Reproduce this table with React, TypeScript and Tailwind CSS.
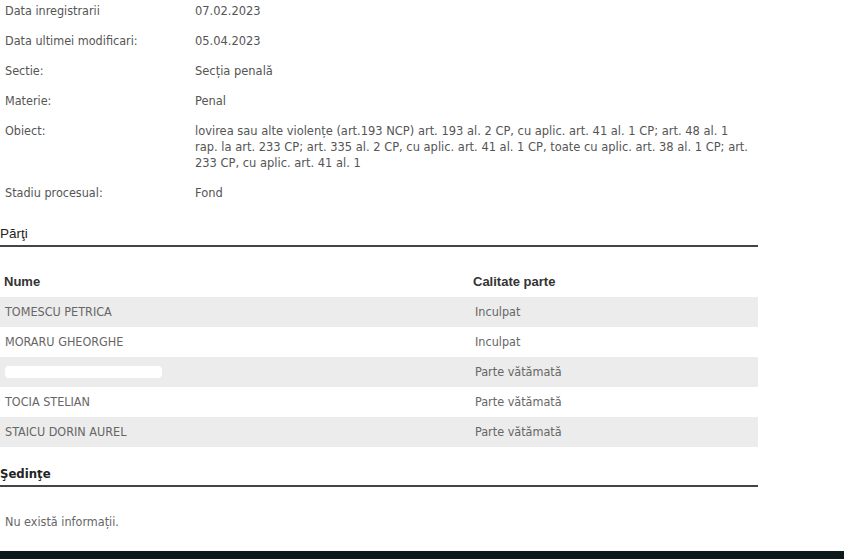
import React from "react";

const info: { label: string; value: React.ReactNode }[] = [
  { label: "Data inregistrarii", value: "07.02.2023" },
  { label: "Data ultimei modificari:", value: "05.04.2023" },
  { label: "Sectie:", value: "Secția penală" },
  { label: "Materie:", value: "Penal" },
  {
    label: "Obiect:",
    value: (
      <>
        lovirea sau alte violențe (art.193 NCP) art. 193 al. 2 CP, cu aplic. art. 41 al. 1 CP; art. 48 al. 1
        <br />
        rap. la art. 233 CP; art. 335 al. 2 CP, cu aplic. art. 41 al. 1 CP, toate cu aplic. art. 38 al. 1 CP; art.
        <br />
        233 CP, cu aplic. art. 41 al. 1
      </>
    ),
  },
  { label: "Stadiu procesual:", value: "Fond" },
];

const parti: { nume: string; calitate: string; hidden?: boolean }[] = [
  { nume: "TOMESCU PETRICA", calitate: "Inculpat" },
  { nume: "MORARU GHEORGHE", calitate: "Inculpat" },
  { nume: "", calitate: "Parte vătămată", hidden: true },
  { nume: "TOCIA STELIAN", calitate: "Parte vătămată" },
  { nume: "STAICU DORIN AUREL", calitate: "Parte vătămată" },
];

const cond = '"DejaVu Sans Condensed", "DejaVu Sans", sans-serif';

export default function App() {
  return (
    <div className="w-[844px] h-[559px] bg-white overflow-hidden flex flex-col relative">
      <div className="flex-1 w-[758px]">
        <div
          className="grid grid-cols-[190px_1fr] gap-y-[14px] pt-[3px] pl-[5px] leading-[16px] text-[#555]"
          style={{ fontFamily: cond }}
        >
          {info.map((r) => (
            <React.Fragment key={r.label}>
              <div className="text-[12.5px]">{r.label}</div>
              <div className="whitespace-nowrap text-[12.75px]">{r.value}</div>
            </React.Fragment>
          ))}
        </div>

        <div
          className="mt-[25px] text-[13.5px] leading-[16px] text-[#222] border-b-2 border-[#444] pb-[3px]"
          style={{ fontFamily: '"Liberation Sans", Arial, sans-serif' }}
        >
          Părţi
        </div>

        <div style={{ fontFamily: '"Liberation Sans", Arial, sans-serif' }}>
          <div className="flex pt-[27px] pb-[7px] text-[13px] leading-[16px] font-bold text-[#333]">
            <div className="w-[473px] pl-[4px]">Nume</div>
            <div>Calitate parte</div>
          </div>
          {parti.map((p, i) => (
            <div
              key={i}
              className={`flex h-[30px] items-center text-[12.5px] leading-[16px] text-[#666] ${i % 2 === 0 ? "bg-[#ececec]" : "bg-white"}`}
              style={{ fontFamily: cond }}
            >
              <div className="w-[475px] pl-[5px]">
                {p.hidden ? (
                  <div className="w-[157px] h-[12px] bg-white rounded-[4px]" />
                ) : (
                  p.nume
                )}
              </div>
              <div>{p.calitate}</div>
            </div>
          ))}
        </div>

        <div
          className="mt-[19px] text-[13px] leading-[16px] text-[#222] font-semibold border-b-2 border-[#444] pb-[3px]"
          style={{ fontFamily: cond }}
        >
          Şedinţe
        </div>
        <div
          className="mt-[27px] pl-[5px] text-[12.5px] leading-[16px] text-[#666]"
          style={{ fontFamily: cond }}
        >
          Nu există informații.
        </div>
      </div>
      <div className="h-[8px] bg-[#0c1a1e] shrink-0" />
    </div>
  );
}
